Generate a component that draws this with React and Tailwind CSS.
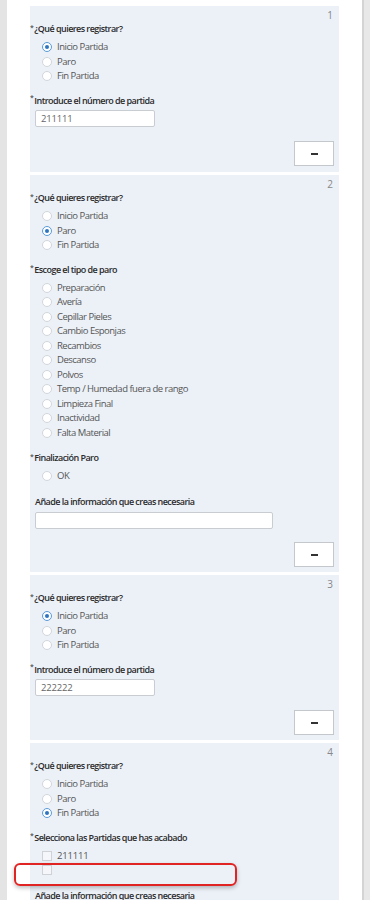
import React from "react";

const font = { fontFamily: '"Open Sans", "Liberation Sans", sans-serif' };

function Radio({ label, checked }) {
  return (
    <div className="flex items-center h-[14.5px] pl-[12px]">
      <span
        className={`w-[10px] h-[10px] rounded-full border flex items-center justify-center bg-white ${
          checked ? "border-[#5a9ad8]" : "border-[#d2d6dc]"
        }`}
      >
        {checked && <span className="w-[4px] h-[4px] rounded-full bg-[#2f74c0]" />}
      </span>
      <span className="ml-[5px] text-[9.5px] text-[#555] tracking-[-0.5px]">{label}</span>
    </div>
  );
}

function Check({ label }) {
  return (
    <div className="flex items-center h-[14.5px] pl-[12px]">
      <span className="w-[10px] h-[10px] border border-[#cfd3d8] bg-[#f4f6f9]" />
      <span className="ml-[5px] text-[9.5px] text-[#555] tracking-[-0.2px]">{label}</span>
    </div>
  );
}

function Label({ children, className = "", sup }) {
  return (
    <div className={`h-[14px] flex items-center text-[9px] font-semibold text-[#2b2b2b] tracking-[-0.55px] ${className}`}>
      <span className={`text-[7px] text-[#555] mr-[1px] ${sup ? "-mt-[6px]" : "-mt-[2px]"}`}>*</span>
      {children}
    </div>
  );
}

function Minus() {
  return (
    <div className="flex justify-end pr-[5px]">
      <button className="w-[40px] h-[25px] bg-white border border-[#c4c8cc] flex items-center justify-center">
        <span className="w-[7px] h-[2px] bg-[#333]" />
      </button>
    </div>
  );
}

function Panel({ n, children, className = "" }) {
  return (
    <div className={`bg-[#ecf1f8] pt-[3px] ${className}`}>
      <div className="h-[13px] text-right pr-[6px] text-[10px] leading-[12px] text-[#888]">{n}</div>
      {children}
    </div>
  );
}

const registro = ["Inicio Partida", "Paro", "Fin Partida"];
const paros = [
  "Preparación",
  "Avería",
  "Cepillar Pieles",
  "Cambio Esponjas",
  "Recambios",
  "Descanso",
  "Polvos",
  "Temp / Humedad fuera de rango",
  "Limpieza Final",
  "Inactividad",
  "Falta Material",
];

function Registro({ sel }) {
  return (
    <>
      <Label>¿Qué quieres registrar?</Label>
      <div className="mt-[4px]">
        {registro.map((r, i) => (
          <Radio key={r} label={r} checked={i === sel} />
        ))}
      </div>
    </>
  );
}

function Info() {
  return (
    <div className="mt-[11.5px] pl-[5px] h-[14px] flex items-center text-[9px] font-semibold text-[#2b2b2b] tracking-[-0.55px]">
      Añade la información que creas necesaria
    </div>
  );
}

function Partida({ value }) {
  return (
    <>
      <Label sup className="mt-[10.5px]">Introduce el número de partida</Label>
      <div className="mt-[2px] ml-[5px] w-[120px] h-[17px] bg-white border border-[#c9cdd2] rounded-[2px] px-[5px] text-[9.5px] leading-[15px] text-[#666] tracking-[-0.2px]">
        {value}
      </div>
      <div className="mt-[14px]">
        <Minus />
      </div>
    </>
  );
}

export default function App() {
  return (
    <div className="relative flex min-h-[1000px] bg-white" style={font}>
      <div className="w-[7px] bg-[#e4e4e4]" />
      <div className="flex-1 pl-[23px] pr-[23px] pt-[6px]">
        <Panel n="1" className="pb-[6px]">
          <Registro sel={0} />
          <Partida value="211111" />
        </Panel>

        <Panel n="2" className="mt-[3px] pb-[5px]">
          <Registro sel={1} />
          <Label className="mt-[10px]">Escoge el tipo de paro</Label>
          <div className="mt-[4px]">
            {paros.map((p) => (
              <Radio key={p} label={p} />
            ))}
          </div>
          <Label className="mt-[11px]">Finalización Paro</Label>
          <div className="mt-[4px]">
            <Radio label="OK" />
          </div>
          <Info />
          <div className="mt-[3px] ml-[5px] w-[238px] h-[17px] bg-white border border-[#c9cdd2] rounded-[2px]" />
          <div className="mt-[13px]">
            <Minus />
          </div>
        </Panel>

        <Panel n="3" className="mt-[3px] pb-[5px]">
          <Registro sel={0} />
          <Partida value="222222" />
        </Panel>

        <Panel n="4" className="mt-[3px] pb-[6px]">
          <Registro sel={2} />
          <Label className="mt-[10px]">Selecciona las Partidas que has acabado</Label>
          <div className="mt-[4px]">
            <Check label="211111" />
            <Check label="" />
          </div>
          <Info />
          <div className="mt-[3px] ml-[5px] w-[238px] h-[17px] bg-white border border-[#c9cdd2] rounded-[2px]" />
          <div className="mt-[14px]">
            <Minus />
          </div>
        </Panel>
      </div>
      <div className="w-[2px] bg-[#d4d4d4]" />
      <div className="w-[6px] bg-[#e8e8e8]" />

      <div className="absolute left-[14px] top-[863px] w-[223px] h-[23px] border-2 border-[#e02424] rounded-[6px] shadow-[0_2px_4px_rgba(0,0,0,0.25)]" />
    </div>
  );
}
